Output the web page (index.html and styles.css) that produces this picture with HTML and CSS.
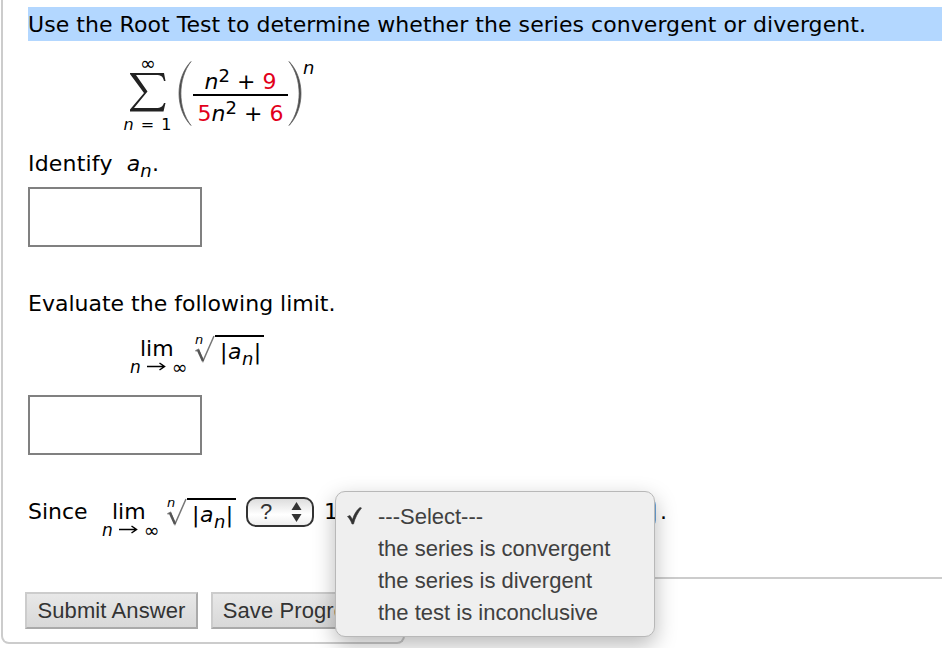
FILE: index.html
```html
<!DOCTYPE html>
<html lang="en">
<head>
    <meta charset="UTF-8">
    <meta name="viewport" content="width=device-width, initial-scale=1.0">
    <title>Root Test</title>
    <link rel="stylesheet" href="styles.css">
</head>
<body>
    <div class="question">
        <p class="prompt">Use the Root Test to determine whether the series convergent or divergent.</p>

        <!-- Series -->
        <div class="series">
            <div class="sum">
                <span class="sum-top">∞</span>
                <svg class="sigma" width="36" height="39" viewBox="0 0 36 39">
                    <path d="M0 0H34L35.500 8H34C33 3.500 31 2 26 2H6L17.500 18.500L4 35H26C31 35 33 33 34 30H35.500L33.500 38.500H0V36.500L14 20L0 1Z" fill="#222"/>
                </svg>
                <span class="sum-bottom"><i>n</i> = 1</span>
            </div>
            <svg class="paren" width="14" height="66" viewBox="0 0 14 66">
                <path d="M13 0.500C-3 17-3 48 13 64.500C-0.500 47-0.500 18 13 0.500Z" fill="#444" stroke="#666" stroke-width="0.800"/>
            </svg>
            <div class="fraction">
                <div class="numerator"><i>n</i><sup>2</sup> + <b>9</b></div>
                <div class="denominator"><b>5</b><i>n</i><sup>2</sup> + <b>6</b></div>
            </div>
            <svg class="paren" width="14" height="66" viewBox="0 0 14 66">
                <path d="M1 0.500C17 17 17 48 1 64.500C14.500 47 14.500 18 1 0.500Z" fill="#444" stroke="#666" stroke-width="0.800"/>
            </svg>
            <i class="exponent">n</i>
        </div>

        <p class="identify"><span>Identify</span> <span class="term"><i>a</i><sub>n</sub>.</span></p>
        <input class="answer" type="text" aria-label="a sub n">

        <p class="evaluate">Evaluate the following limit.</p>
        <div class="limit-row">
            <div class="limit">
                <span class="lim">lim</span>
                <span class="approach"><i>n</i>
                    <svg width="19" height="9" viewBox="0 0 19 9"><path d="M0 4.500H17M12.500 1L17.500 4.500L12.500 8" fill="none" stroke="#000" stroke-width="1.500"/></svg>
                    <span class="infinity">∞</span></span>
            </div>
            <div class="root">
                <i class="index">n</i>
                <svg class="radical" width="20" height="28" viewBox="0 0 20 28"><path d="M0.500 16L3.500 14.500L8 26L19 1" fill="none" stroke="#777" stroke-width="1.500"/><path d="M3 15L8 26" stroke="#555" stroke-width="2.500"/></svg>
                <span class="radicand">|<i>a</i><sub>n</sub>|</span>
            </div>
        </div>
        <input class="answer" type="text" aria-label="limit">

        <!-- Conclusion -->
        <div class="conclusion">
            <span class="since">Since</span>
            <div class="limit">
                <span class="lim">lim</span>
                <span class="approach"><i>n</i>
                    <svg width="19" height="9" viewBox="0 0 19 9"><path d="M0 4.500H17M12.500 1L17.500 4.500L12.500 8" fill="none" stroke="#000" stroke-width="1.500"/></svg>
                    <span class="infinity">∞</span></span>
            </div>
            <div class="root">
                <i class="index">n</i>
                <svg class="radical" width="20" height="28" viewBox="0 0 20 28"><path d="M0.500 16L3.500 14.500L8 26L19 1" fill="none" stroke="#777" stroke-width="1.500"/><path d="M3 15L8 26" stroke="#555" stroke-width="2.500"/></svg>
                <span class="radicand">|<i>a</i><sub>n</sub>|</span>
            </div>
            <button class="compare" type="button">
                <span>?</span>
                <svg width="11" height="20" viewBox="0 0 11 20"><path d="M5.500 0L10.500 8H0.500ZM5.500 20L10.500 12H0.500Z" fill="#333"/></svg>
            </button>
            <span class="one">1</span>
            <div class="select">
                <div class="select-field"></div>
                <ul class="menu">
                    <li><svg class="check" width="15" height="18" viewBox="0 0 15 18"><path d="M0.500 9.500L3 8.500L5.500 12.500C7 7.500 9.500 3 13 0.500L14.500 1C10.500 6 8 11 6.500 17H5C4 14 2.500 11.500 0.500 9.500Z" fill="#333" stroke="#333" stroke-width="0.600"/></svg>---Select---</li>
                    <li>the series is convergent</li>
                    <li>the series is divergent</li>
                    <li>the test is inconclusive</li>
                </ul>
            </div>
            <span class="stop">.</span>
        </div>
    </div>

    <div class="footer">
        <div class="actions">
            <button class="btn submit" type="button">Submit Answer</button>
            <button class="btn save" type="button">Save Progress</button>
        </div>
        <div class="rule"></div>
    </div>
</body>
</html>
```

FILE: styles.css
```css
* {
    box-sizing: border-box;
}

body {
    margin: 0;
    height: 648px;
    overflow: hidden;
    background: #fff;
    color: #000;
    font-family: Verdana, "DejaVu Sans", sans-serif;
    font-size: 22px;
}

p {
    margin: 0;
}

sup, sub {
    font-size: 18px;
    line-height: 0;
}

sub {
    font-style: italic;
    vertical-align: -6px;
}

sup {
    vertical-align: 7px;
}

.question {
    height: 577px;
    margin-left: 1px;
    padding: 7px 0 0 25px;
    border-left: 2px solid #ccc;
}

.prompt {
    height: 34px;
    line-height: 36px;
    background: #b3d7ff;
    letter-spacing: 0.05px;
    white-space: nowrap;
}

/* Series */
.series {
    display: flex;
    align-items: flex-start;
    height: 106px;
    padding: 20px 0 0 90px;
}

.sum {
    display: flex;
    flex-direction: column;
    align-items: center;
    width: 60px;
    margin-top: -5px;
    font-size: 16px;
}

.sum-top {
    height: 17px;
    font-size: 19px;
    line-height: 14px;
}

.sum-bottom {
    line-height: 26px;
    letter-spacing: 1px;
    white-space: nowrap;
}

.fraction {
    width: 95px;
    margin-left: 1px;
    text-align: center;
    white-space: nowrap;
}

.fraction b {
    color: #e2001a;
    font-weight: normal;
}

.numerator {
    height: 35px;
    line-height: 42px;
    border-bottom: 2px solid #000;
}

.denominator {
    line-height: 36px;
}

.exponent {
    margin-left: 1px;
    font-size: 18px;
    line-height: 13px;
}

.identify {
    display: flex;
    gap: 14px;
    height: 40px;
    line-height: 33px;
    letter-spacing: 0.2px;
}

.answer {
    display: block;
    width: 174px;
    height: 60px;
    border: 2px solid #808080;
}

.evaluate {
    height: 88px;
    padding-top: 40px;
    line-height: 33px;
}

/* Limit */
.limit-row {
    display: flex;
    height: 60px;
    padding-left: 102px;
}

.limit {
    display: flex;
    flex-direction: column;
    width: 58px;
    margin-right: 7px;
}

.lim {
    padding-left: 10px;
    line-height: 27px;
}

.approach {
    display: flex;
    align-items: center;
    gap: 6px;
    height: 9px;
    font-size: 17px;
}

.approach svg {
    flex: none;
}

.infinity {
    font-size: 19px;
}

.root {
    display: flex;
    width: 69px;
}

.index {
    width: 0;
    font-size: 13px;
    line-height: 10px;
}

.radical {
    flex: none;
}

.radicand {
    width: 49px;
    height: 30px;
    padding-left: 5px;
    border-top: 2px solid #000;
    line-height: 30px;
    letter-spacing: 0.5px;
    white-space: nowrap;
}

/* Conclusion */
.conclusion {
    display: flex;
    height: 50px;
    margin-top: 43px;
}

.since {
    width: 74px;
    line-height: 27px;
}

.compare {
    display: flex;
    align-items: center;
    justify-content: space-between;
    width: 68px;
    height: 30px;
    margin: -1px 0 0 10px;
    padding: 0 10px 0 12px;
    border: 2px solid #333;
    border-radius: 10px;
    background: linear-gradient(#ddd, #fff 60%, #eee);
    color: #333;
    font-family: Arial, "Liberation Sans", sans-serif;
    font-size: 22px;
}

.one {
    width: 24px;
    margin-left: 10px;
    line-height: 27px;
}

.select {
    position: relative;
    width: 308px;
}

.select-field {
    height: 29px;
    border: 2px solid #6da6dc;
    border-radius: 7px;
}

.menu {
    position: absolute;
    top: -7px;
    left: -13px;
    width: 320px;
    height: 146px;
    margin: 0;
    padding: 9px 0 0 42px;
    border: 1px solid #b8b8b8;
    border-radius: 10px;
    background: #efefef;
    box-shadow: 0 8px 22px rgba(0, 0, 0, 0.28);
    color: #404040;
    font-family: Arial, "Liberation Sans", sans-serif;
    font-size: 22px;
    line-height: 32px;
    list-style: none;
    white-space: nowrap;
}

.menu li {
    display: flex;
    height: 32px;
}

.check {
    margin: 6px 16px 0 -31px;
}

.stop {
    margin-left: 4px;
    line-height: 27px;
}

/* Footer */
.footer {
    display: flex;
    height: 67px;
    margin-left: 1px;
}

.actions {
    display: flex;
    gap: 13px;
    width: 404px;
    padding: 15px 0 0 22px;
    border: 2px solid #ccc;
    border-top: none;
    border-radius: 0 0 8px 8px;
}

.btn {
    flex: none;
    height: 37px;
    padding: 0;
    border: 2px solid;
    border-color: #ccc #aaa #aaa #ccc;
    background: linear-gradient(#e8e8e8, #d8d8d8);
    color: #333;
    font-family: Arial, "Liberation Sans", sans-serif;
    font-size: 22px;
    letter-spacing: 0.1px;
    white-space: nowrap;
}

.submit {
    width: 173px;
}

.save {
    width: 169px;
}

.rule {
    flex: 1;
    border-top: 2px solid #ccc;
}
```
